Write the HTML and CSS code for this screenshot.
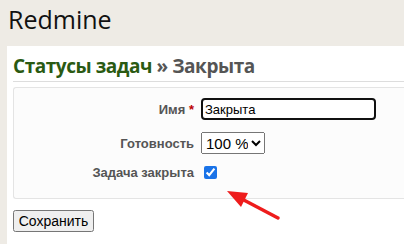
FILE: index.html
```html
<!DOCTYPE html>
<html>
<head>
<meta charset="utf-8">
<link rel="stylesheet" href="styles.css">
</head>
<body>
<div class="header"><h1 class="logo">Redmine</h1></div>
<div class="main">
  <h2 class="title"><a class="crumb" href="#">Статусы задач</a> » Закрыта</h2>
  <div class="box">
    <div class="row r1">
      <label class="lbl">Имя <span class="req">*</span></label>
      <input class="name" type="text" value="Закрыта">
    </div>
    <div class="row r2">
      <label class="lbl">Готовность</label>
      <select class="sel"><option>100 %</option></select>
    </div>
    <div class="row r3">
      <label class="lbl">Задача закрыта</label>
      <input class="chk" type="checkbox" checked>
    </div>
  </div>
  <button class="save">Сохранить</button>
  <svg class="arrow" width="64" height="40" viewBox="0 0 64 40">
    <line x1="55" y1="31" x2="17" y2="11" stroke="#ee1c1c" stroke-width="3.5" stroke-linecap="round"/>
    <polygon points="4,4 25,6 18,20" fill="#ee1c1c"/>
  </svg>
</div>
</body>
</html>
```
FILE: styles.css
```css
html, body { margin: 0; padding: 0; }
body {
  background: #eeebe5;
  font-family: "Liberation Sans", Arial, sans-serif;
  font-size: 13px;
  color: #333;
  height: 244px;
  overflow: hidden;
  display: flex;
  flex-direction: column;
}
.header { padding: 2px 0 0 8px; height: 46px; box-sizing: border-box; }
.logo {
  margin: 0;
  font-family: "Open Sans", sans-serif;
  font-weight: normal;
  font-size: 25px;
  line-height: 34px;
  color: #111;
}
.main {
  flex: 1;
  background: #fff;
  margin-left: 7px;
  padding: 5px 0 0 6px;
  display: flex;
  flex-direction: column;
  position: relative;
}
.title {
  margin: 0;
  font-family: "Open Sans", sans-serif;
  font-weight: bold;
  font-size: 19px;
  letter-spacing: -0.45px;
  line-height: 30px;
  color: #555;
  border-bottom: 1px solid #ddd;
}
.crumb { color: #2a5a12; text-decoration: none; }
.box {
  margin-top: 5px;
  background: #fcfcfc;
  border: 1px solid #e4e4e4;
  border-right: none;
  border-radius: 3px 0 0 3px;
  padding: 10px 0 15px 0;
  display: flex;
  flex-direction: column;
}
.row { display: flex; align-items: center; height: 22px; }
.r2 { margin-top: 12px; }
.r3 { margin-top: 7px; }
.lbl {
  width: 180px;
  text-align: right;
  font-weight: bold;
  color: #555;
  margin-right: 7px;
}
.req { color: #bb0000; }
.name {
  width: 175px;
  height: 22px;
  box-sizing: border-box;
  border: 2px solid #111;
  border-radius: 4px;
  font-family: "Liberation Sans", Arial, sans-serif;
  font-size: 13px;
  padding: 0 2px;
  outline: none;
  margin: 0;
}
.sel {
  height: 22px;
  width: 64px;
  font-family: "Liberation Sans", Arial, sans-serif;
  font-size: 15px;
  margin: 0;
}
.chk { margin: 0 0 0 3px; width: 13px; height: 13px; accent-color: #1a73e8; }
.save {
  margin-top: 11px;
  align-self: flex-start;
  font-family: "Liberation Sans", Arial, sans-serif;
  font-size: 14px;
  height: 22px;
  width: 81px;
  padding: 0;
}
.arrow { position: absolute; left: 216px; top: 141px; }
```
